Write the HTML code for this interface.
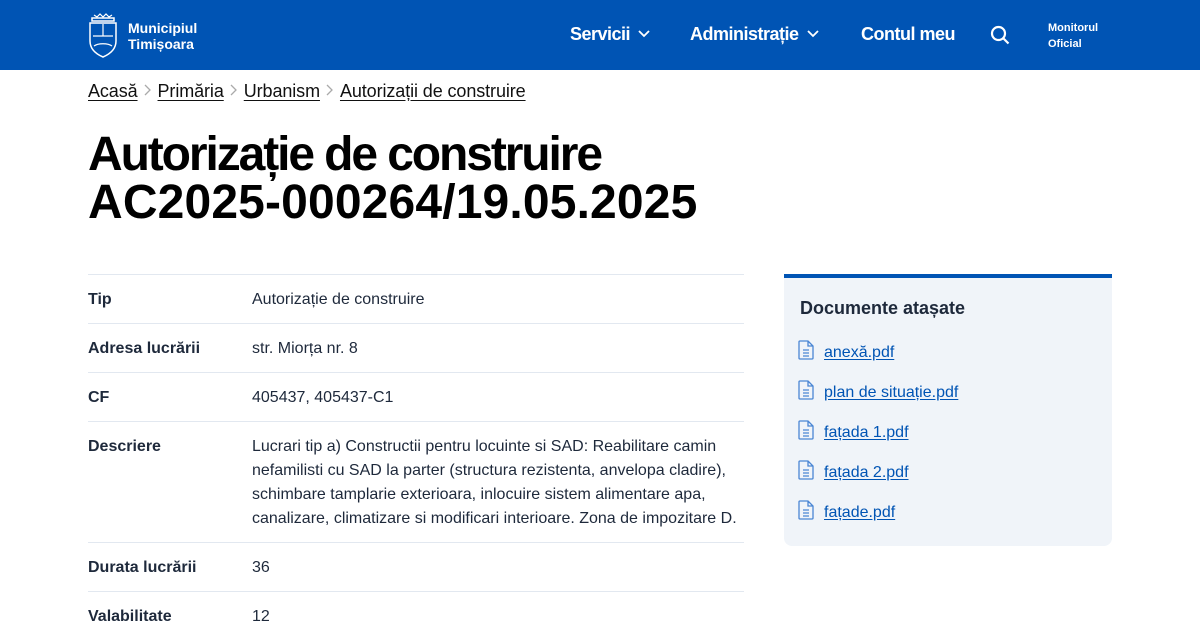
<!DOCTYPE html>
<html><head><meta charset="utf-8"><style>
*{margin:0;padding:0;box-sizing:border-box}
body{width:1200px;height:630px;overflow:hidden;background:#fff;font-family:"Liberation Sans",sans-serif;color:#1e293b}
.hdr{height:70px;background:#0054b4;position:relative;color:#fff}
.logo{position:absolute;left:88px;top:12px}
.brand{position:absolute;left:128px;top:20px;font-size:14px;font-weight:bold;line-height:16px}
.nav{position:absolute;top:24px;font-size:18px;font-weight:bold;letter-spacing:-0.5px}
.nav svg{margin-left:8px;vertical-align:2px}
.mon{position:absolute;left:1048px;top:20px;font-size:11px;line-height:16px;font-weight:bold}
.bc{position:absolute;top:81px;left:88px;font-size:18px;color:#111;letter-spacing:-0.1px}
.bc a{color:#111;text-decoration:underline;text-underline-offset:3px}
.bc .s{margin:0 6px;vertical-align:1px}
h1{position:absolute;left:88px;top:131px;font-size:48px;line-height:48px;color:#000;font-weight:bold}
table{position:absolute;left:88px;top:274px;width:656px;border-collapse:collapse;font-size:16px}
td{border-top:1px solid #e2e8f0;padding:13px 0 11px;line-height:24px;vertical-align:top}
td.l{width:164px;font-weight:bold}
.side{position:absolute;left:784px;top:274px;width:328px;height:272px;background:#f0f4f9;border-top:4px solid #0054b4;border-radius:0 0 8px 8px}
.side h3{position:absolute;left:16px;top:20px;font-size:18px}
.doc{position:absolute;left:14px;font-size:16px;color:#0054b4}
.doc span{text-decoration:underline;margin-left:10px;text-underline-offset:2px}
.doc svg{vertical-align:-3px}
</style></head><body>
<div class="hdr">
<svg class="logo" width="30" height="46" viewBox="0 0 30 46"><path d="M4 6h22v3H4zM2 11h26v18c0 8-6 13-13 16C8 42 2 37 2 29z" fill="none" stroke="#fff" stroke-width="1.5"/><path d="M6 3l3 2 3-3 3 3 3-3 3 3 3-2" fill="none" stroke="#fff" stroke-width="1.2"/><path d="M5 24h20M15 12v12M6 34c4-3 14-3 18 0" stroke="#fff" stroke-width="1.2" fill="none"/></svg>
<div class="brand">Municipiul<br>Timișoara</div>
<div class="nav" style="left:570px">Servicii<svg width="12" height="8" viewBox="0 0 12 8"><path d="M1 1l5 5 5-5" fill="none" stroke="#fff" stroke-width="1.8"/></svg></div>
<div class="nav" style="left:690px">Administrație<svg width="12" height="8" viewBox="0 0 12 8"><path d="M1 1l5 5 5-5" fill="none" stroke="#fff" stroke-width="1.8"/></svg></div>
<div class="nav" style="left:861px">Contul meu</div>
<svg style="position:absolute;left:990px;top:25px" width="20" height="20" viewBox="0 0 20 20"><circle cx="8.5" cy="8.5" r="6.5" fill="none" stroke="#fff" stroke-width="2.2"/><path d="M13.5 13.5l5 5" stroke="#fff" stroke-width="2.2"/></svg>
<div class="mon">Monitorul<br>Oficial</div>
</div>
<div class="bc"><a>Acasă</a><svg class="s" width="8" height="12" viewBox="0 0 8 12"><path d="M1 1l5 5-5 5" fill="none" stroke="#aaa" stroke-width="1.3"/></svg><a>Primăria</a><svg class="s" width="8" height="12" viewBox="0 0 8 12"><path d="M1 1l5 5-5 5" fill="none" stroke="#aaa" stroke-width="1.3"/></svg><a>Urbanism</a><svg class="s" width="8" height="12" viewBox="0 0 8 12"><path d="M1 1l5 5-5 5" fill="none" stroke="#aaa" stroke-width="1.3"/></svg><a>Autorizații de construire</a></div>
<h1><span style="letter-spacing:-2.1px">Autorizație de construire</span><br><span style="letter-spacing:0.15px">AC2025-000264/19.05.2025</span></h1>
<table>
<tr><td class="l">Tip</td><td>Autorizație de construire</td></tr>
<tr><td class="l">Adresa lucrării</td><td>str. Miorța nr. 8</td></tr>
<tr><td class="l">CF</td><td>405437, 405437-C1</td></tr>
<tr><td class="l">Descriere</td><td>Lucrari tip a) Constructii pentru locuinte si SAD: Reabilitare camin nefamilisti cu SAD la parter (structura rezistenta, anvelopa cladire), schimbare tamplarie exterioara, inlocuire sistem alimentare apa, canalizare, climatizare si modificari interioare. Zona de impozitare D.</td></tr>
<tr><td class="l">Durata lucrării</td><td>36</td></tr>
<tr><td class="l">Valabilitate</td><td>12</td></tr>
</table>
<div class="side"><h3>Documente atașate</h3>
<div class="doc" style="top:62px"><svg width="16" height="20" viewBox="0 0 16 20"><path d="M2 1h8l5 5v12a1 1 0 0 1-1 1H2a1 1 0 0 1-1-1V2a1 1 0 0 1 1-1zM10 1v5h5M5 10h6M5 13h6M5 16h6" fill="none" stroke="#4a86d4" stroke-width="1.3"/></svg><span>anexă.pdf</span></div>
<div class="doc" style="top:102px"><svg width="16" height="20" viewBox="0 0 16 20"><path d="M2 1h8l5 5v12a1 1 0 0 1-1 1H2a1 1 0 0 1-1-1V2a1 1 0 0 1 1-1zM10 1v5h5M5 10h6M5 13h6M5 16h6" fill="none" stroke="#4a86d4" stroke-width="1.3"/></svg><span>plan de situație.pdf</span></div>
<div class="doc" style="top:142px"><svg width="16" height="20" viewBox="0 0 16 20"><path d="M2 1h8l5 5v12a1 1 0 0 1-1 1H2a1 1 0 0 1-1-1V2a1 1 0 0 1 1-1zM10 1v5h5M5 10h6M5 13h6M5 16h6" fill="none" stroke="#4a86d4" stroke-width="1.3"/></svg><span>fațada 1.pdf</span></div>
<div class="doc" style="top:182px"><svg width="16" height="20" viewBox="0 0 16 20"><path d="M2 1h8l5 5v12a1 1 0 0 1-1 1H2a1 1 0 0 1-1-1V2a1 1 0 0 1 1-1zM10 1v5h5M5 10h6M5 13h6M5 16h6" fill="none" stroke="#4a86d4" stroke-width="1.3"/></svg><span>fațada 2.pdf</span></div>
<div class="doc" style="top:222px"><svg width="16" height="20" viewBox="0 0 16 20"><path d="M2 1h8l5 5v12a1 1 0 0 1-1 1H2a1 1 0 0 1-1-1V2a1 1 0 0 1 1-1zM10 1v5h5M5 10h6M5 13h6M5 16h6" fill="none" stroke="#4a86d4" stroke-width="1.3"/></svg><span>fațade.pdf</span></div>
</div>
</body></html>
